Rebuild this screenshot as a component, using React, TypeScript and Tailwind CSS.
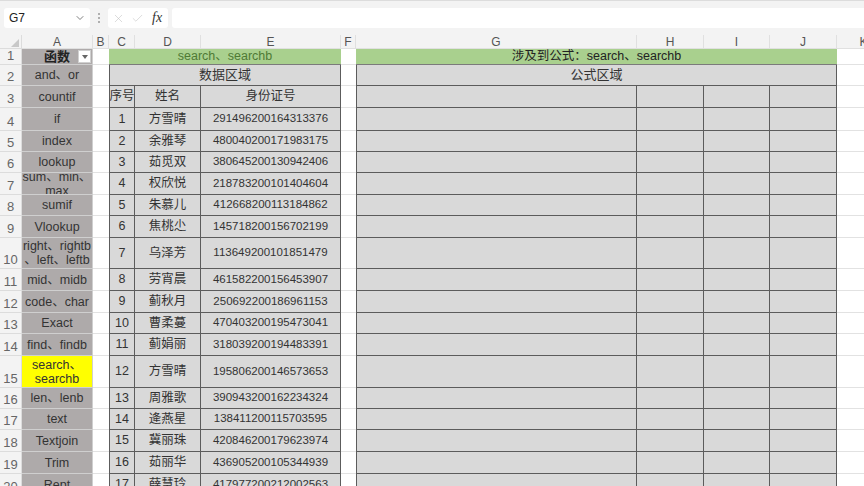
import React from 'react';
import { ChevronDown, X, Check } from 'lucide-react';

const funcs: string[][] = [
  ['函数'],
  ['and、or'],
  ['countif'],
  ['if'],
  ['index'],
  ['lookup'],
  ['sum、min、', 'max'],
  ['sumif'],
  ['Vlookup'],
  ['right、rightb', '、left、leftb'],
  ['mid、midb'],
  ['code、char'],
  ['Exact'],
  ['find、findb'],
  ['search、', 'searchb'],
  ['len、lenb'],
  ['text'],
  ['Textjoin'],
  ['Trim'],
  ['Rept'],
];

const people: [string, string][] = [
  ['方雪晴', '291496200164313376'],
  ['余雅琴', '480040200171983175'],
  ['茹觅双', '380645200130942406'],
  ['权欣悦', '218783200101404604'],
  ['朱慕儿', '412668200113184862'],
  ['焦桃尐', '145718200156702199'],
  ['乌泽芳', '113649200101851479'],
  ['劳宵晨', '461582200156453907'],
  ['蓟秋月', '250692200186961153'],
  ['曹柔蔓', '470403200195473041'],
  ['蓟娟丽', '318039200194483391'],
  ['方雪晴', '195806200146573653'],
  ['周雅歌', '390943200162234324'],
  ['逄燕星', '138411200115703595'],
  ['冀丽珠', '420846200179623974'],
  ['茹丽华', '436905200105344939'],
  ['薛慧玲', '417977200212002563'],
];

const colLetters = ['A', 'B', 'C', 'D', 'E', 'F', 'G', 'H', 'I', 'J', 'K'];

const white = 'bg-white border-r border-b border-[#e2e2e2]';
const whiteNoR = 'bg-white border-b border-[#e2e2e2]';
const data = 'bg-[#d9d9d9] border-r border-b border-[#5c5c5c] flex items-center justify-center overflow-hidden whitespace-nowrap';
const green = 'bg-[#a9d08e] border-b border-[#7b7b7b] flex items-center justify-center whitespace-nowrap overflow-hidden';

function Toolbar() {
  return (
    <div className="h-[35px] bg-[#f3f3f3] border-t border-[#dcdcdc] flex items-start pt-[7px]">
      <div className="ml-[4px] w-[86px] h-[20px] bg-white rounded-[3px] flex items-center justify-between pl-[5px] pr-[4px] text-[12px] text-[#222]">
        <span>G7</span>
        <ChevronDown size={12} strokeWidth={1.5} className="text-[#555]" />
      </div>
      <div className="w-[18px] h-[20px] flex flex-col items-center justify-center gap-[2px]">
        <span className="w-[2px] h-[2px] rounded-full bg-[#999]" />
        <span className="w-[2px] h-[2px] rounded-full bg-[#999]" />
        <span className="w-[2px] h-[2px] rounded-full bg-[#999]" />
      </div>
      <div className="w-[60px] h-[20px] bg-white rounded-[3px] flex items-center pl-[4px] gap-[6px]">
        <X size={13} strokeWidth={1} className="text-[#bdbdbd]" />
        <Check size={13} strokeWidth={1} className="text-[#bdbdbd]" />
        <span className="ml-[2px] font-['Liberation_Serif',serif] italic text-[14px] leading-none text-[#333]">fx</span>
      </div>
      <div className="ml-[4px] flex-1 h-[20px] bg-white rounded-l-[3px]" />
    </div>
  );
}

function HeaderRow() {
  return (
    <>
      <div className="bg-[#f3f3f3] border-r border-b border-[#dcdcdc] flex items-end justify-end pr-[2px] pb-[1px]">
        <svg width="8" height="8" viewBox="0 0 8 8">
          <polygon points="8,0 8,8 0,8" fill="#c8c8c8" />
        </svg>
      </div>
      {colLetters.map((l) => (
        <div
          key={l}
          className="bg-[#f3f3f3] border-r border-b border-[#e0e0e0] flex items-center justify-center text-[12px] text-[#555] overflow-hidden"
        >
          {l}
        </div>
      ))}
    </>
  );
}

function FuncCell({ r }: { r: number }) {
  const lines = funcs[r - 1];
  const bg = r === 15 ? 'bg-[#ffff00]' : 'bg-[#aeaaaa]';
  if (r === 1) {
    return (
      <div className={`${bg} border-r border-b border-[#cfcfcf] flex items-center justify-center relative`}>
        <span className="font-bold text-[13px] text-[#222]">函数</span>
        <span className="absolute right-[1px] top-[1px] w-[13px] h-[13px] bg-white border border-[#d0d0d0] flex items-center justify-center">
          <svg width="6" height="4" viewBox="0 0 6 4">
            <polygon points="0,0 6,0 3,4" fill="#666" />
          </svg>
        </span>
      </div>
    );
  }
  return (
    <div className={`${bg} border-r border-b border-[#cfcfcf] flex flex-col items-center justify-center overflow-hidden text-[12.5px] leading-[14px] text-[#333] whitespace-nowrap`}>
      {lines.map((t, i) => (
        <span key={i}>{t}</span>
      ))}
    </div>
  );
}

function Row({ r }: { r: number }) {
  const cells: React.ReactNode[] = [];
  cells.push(
    <div key="h" className="bg-[#f3f3f3] border-r border-b border-[#dcdcdc] flex items-end justify-center pb-[2px] text-[13px] leading-none text-[#666]">
      {r}
    </div>
  );
  cells.push(<FuncCell key="a" r={r} />);
  cells.push(<div key="b" className={whiteNoR} />);

  if (r === 1) {
    cells.push(
      <div key="ce" className={`${green} col-span-3 text-[12.5px] text-[#4f7a35]`}>
        search、searchb
      </div>
    );
  } else if (r === 2) {
    cells.push(
      <div key="ce" className={`${data} border-l col-span-3 text-[13px] text-[#333]`}>
        数据区域
      </div>
    );
  } else if (r === 3) {
    cells.push(<div key="c" className={`${data} border-l text-[12.5px] text-[#333]`}>序号</div>);
    cells.push(<div key="d" className={`${data} text-[12.5px] text-[#333]`}>姓名</div>);
    cells.push(<div key="e" className={`${data} text-[12.5px] text-[#333]`}>身份证号</div>);
  } else {
    const p = people[r - 4];
    cells.push(<div key="c" className={`${data} border-l text-[12.5px] text-[#333]`}>{r - 3}</div>);
    cells.push(<div key="d" className={`${data} text-[12.5px] text-[#333]`}>{p[0]}</div>);
    cells.push(<div key="e" className={`${data} text-[11.5px] text-[#333]`}>{p[1]}</div>);
  }

  cells.push(<div key="f" className={whiteNoR} />);

  if (r === 1) {
    cells.push(
      <div key="gj" className={`${green} col-span-4 text-[12.5px] text-[#222]`}>
        涉及到公式：search、searchb
      </div>
    );
  } else if (r === 2) {
    cells.push(
      <div key="gj" className={`${data} border-l col-span-4 text-[13px] text-[#333]`}>
        公式区域
      </div>
    );
  } else {
    cells.push(<div key="g" className={`${data} border-l`} />);
    cells.push(<div key="h2" className={data} />);
    cells.push(<div key="i" className={data} />);
    cells.push(<div key="j" className={data} />);
  }

  cells.push(<div key="k" className={white} />);
  return <>{cells}</>;
}

export default function App() {
  const rows = Array.from({ length: 20 }, (_, i) => i + 1);
  return (
    <div className="w-[864px] h-[486px] overflow-hidden bg-white font-['Liberation_Sans','Noto_Sans_CJK_SC',sans-serif]">
      <Toolbar />
      <div className="w-[891px] grid grid-cols-[22px_71px_16px_26px_66px_140px_15px_281px_67px_66px_67px_54px] grid-rows-[14px_16px_21px_22px_23px_21px_21px_22px_21px_22px_31px_22px_22px_21px_22px_32px_21px_21px_22px_22px_22px]">
        <HeaderRow />
        {rows.map((r) => (
          <Row key={r} r={r} />
        ))}
      </div>
    </div>
  );
}
